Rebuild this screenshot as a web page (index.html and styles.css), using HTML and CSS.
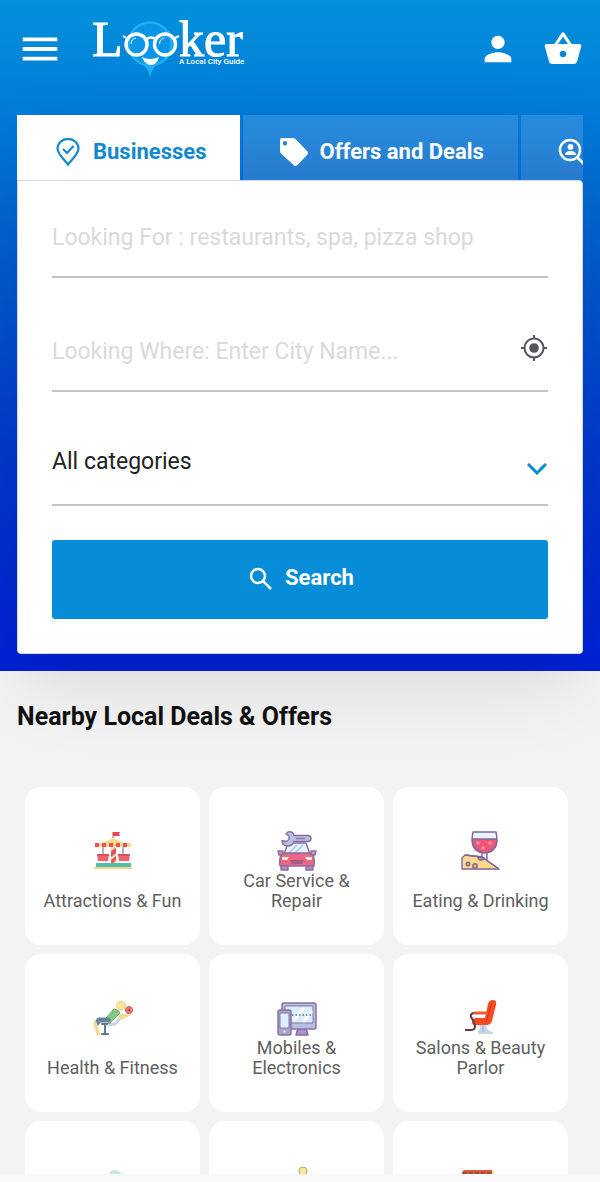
FILE: index.html
```html
<!DOCTYPE html>
<html lang="en">
<head>
<meta charset="utf-8">
<meta name="viewport" content="width=device-width, initial-scale=1">
<title>Looker - A Local City Guide</title>
<link rel="stylesheet" href="styles.css">
</head>
<body>
<div class="page">
  <div class="content">
    <div class="hero">
      <header class="header">
        <button class="icon-button" type="button" aria-label="Menu">
          <svg class="icon-menu" viewBox="0 0 24 24"><path d="M3 18h18v-2H3v2zm0-5h18v-2H3v2zm0-7v2h18V6H3z"/></svg>
        </button>
        <a class="logo" href="#" aria-label="Looker home">
          <svg class="logo-art" viewBox="0 0 156 60">
            <circle cx="58" cy="25" r="21.500" fill="#0a96e8" stroke="#1cb0f4" stroke-width="2.500"/>
            <path d="M52 46.500q4 3 6 12q2-9 6-12z" fill="#1cb0f4"/>
            <text class="logo-name" x="0" y="37">L</text>
            <text class="logo-name" x="87" y="37">ker</text>
            <g fill="none" stroke="#fff">
              <circle cx="44.500" cy="25.500" r="10.500" stroke-width="3.400"/>
              <circle cx="73" cy="25.500" r="10.500" stroke-width="3.400"/>
              <path d="M54 20.500q5-4 10 0" stroke-width="2.500"/>
              <path d="M36 20l-5-3M81 20l6-3" stroke-width="2"/>
              <path d="M39 25q0-5 5-6M67.500 25q0-5 5-6" stroke-width="1"/>
            </g>
            <path d="M50 38q8 4 17 0q-2 8-8 8t-9-8z" fill="#fff"/>
            <text class="logo-tagline" x="87" y="45">A Local City Guide</text>
          </svg>
        </a>
        <nav class="header-actions">
          <button class="icon-button" type="button" aria-label="Account">
            <svg class="icon-action" viewBox="0 0 24 24"><path d="M12 12c2.210 0 4-1.790 4-4s-1.790-4-4-4-4 1.790-4 4 1.790 4 4 4zm0 2c-2.670 0-8 1.340-8 4v2h16v-2c0-2.660-5.330-4-8-4z"/></svg>
          </button>
          <button class="icon-button" type="button" aria-label="Basket">
            <svg class="icon-action" viewBox="0 0 24 24"><path d="M17.210 9l-4.380-6.560c-.19-.28-.51-.42-.83-.42-.32 0-.64.14-.83.430L6.790 9H2c-.55 0-1 .45-1 1 0 .09.010.180.040.270l2.540 9.270c.230.840 1 1.460 1.920 1.460h13c.92 0 1.690-.62 1.930-1.460l2.540-9.270L23 10c0-.55-.45-1-1-1h-4.790zM9 9l3-4.400L15 9H9zm3 8c-1.100 0-2-.9-2-2s.9-2 2-2 2 .9 2 2-.9 2-2 2z"/></svg>
          </button>
        </nav>
      </header>

      <div class="finder">
        <div class="tabs">
          <button class="tab tab-active" type="button">
            <svg class="tab-icon" viewBox="0 0 28 28" fill="none" stroke="currentColor" stroke-width="2.200"><path d="M14 26.500C8 19 3.500 15.500 3.500 10.500a10.500 9.600 0 0 1 21 0c0 5-4.500 8.500-10.500 16z"/><path d="M9 11l4 4 6.500-7"/></svg>
            Businesses
          </button>
          <button class="tab" type="button">
            <svg class="tab-icon" viewBox="0 0 28 28" fill="currentColor"><path fill-rule="evenodd" d="M2 0h11q1.500 0 2.500 1L27 13q2 2 0 4l-9.500 10q-2 2-4 0L1 15.500Q0 14.500 0 13V2q0-2 2-2zm3 3a2.200 2.200 0 1 0 0 4.400A2.200 2.200 0 0 0 5 3z"/></svg>
            Offers and Deals
          </button>
          <button class="tab tab-people" type="button" aria-label="People">
            <svg class="tab-icon" viewBox="0 0 28 28" fill="none" stroke="currentColor"><circle cx="12" cy="12" r="10" stroke-width="2.500"/><path d="M19 19l8 8" stroke-width="3"/><circle cx="12.500" cy="9" r="2.900" fill="currentColor" stroke="none"/><path d="M7 17q0-4 5.500-4t5.500 4z" fill="currentColor" stroke="none"/></svg>
          </button>
        </div>

        <form class="search-card">
          <label class="field">
            <input class="field-control" type="text" aria-label="Looking For" placeholder="Looking For : restaurants, spa, pizza shop">
          </label>
          <label class="field">
            <input class="field-control" type="text" aria-label="Looking Where" placeholder="Looking Where: Enter City Name...">
            <svg class="field-locate" viewBox="0 0 26 26" fill="none" stroke="currentColor" stroke-width="2"><circle cx="13" cy="13" r="9.500"/><circle cx="13" cy="13" r="4.800" fill="currentColor" stroke="none"/><path d="M13 0v4M13 22v4M0 13h4M22 13h4"/></svg>
          </label>
          <label class="field">
            <select class="field-control field-select" aria-label="Category"><option>All categories</option></select>
            <svg class="field-chevron" viewBox="0 0 20 12" fill="none" stroke="currentColor" stroke-width="3"><path d="M1 1l9 9 9-9"/></svg>
          </label>
          <button class="search-button" type="submit">
            <svg class="search-icon" viewBox="0 0 24 24" fill="none" stroke="currentColor" stroke-width="2.500"><circle cx="9" cy="10" r="7"/><path d="M14 15l8 8"/></svg>
            Search
          </button>
        </form>
      </div>
    </div>

    <section class="deals">
      <h2 class="deals-title">Nearby Local Deals &amp; Offers</h2>
      <div class="category-grid">
        <a class="category" href="#">
          <svg class="category-icon" viewBox="0 0 40 40">
            <path d="M20 7V1" stroke="#b9545c" stroke-width="1"/><path d="M20 1h7l-1 2 1 2h-7z" fill="#e84652"/>
            <path d="M3 13q8-1 17-6 9 5 17 6z" fill="#f7db86"/>
            <path d="M2 12h36v4H2z" fill="#f7d88b"/><path d="M2 12h4v4H2zM9 12h4v4H9zM16 12h4v4h-4zM23 12h4v4h-4zM30 12h4v4h-4z" fill="#e6535c"/>
            <path d="M10 16v8M30 16v8" stroke="#75606b" stroke-width="1"/>
            <path d="M18 16h5v16h-5z" fill="#fbd9a0"/><path d="M18 20l5-3v5l-5 4zM18 29l5-4v4l-3 3h-2z" fill="#e6535c"/>
            <path d="M4 23h12l-1 7H5zM25 23h12l-1 7H26z" fill="#ee636c"/><path d="M4 24h12M25 24h12" stroke="#b9424c"/>
            <path d="M3 32h35v4H3z" fill="#58bea5"/><path d="M1 36h38v2H1z" fill="#f3d48c"/>
          </svg>
          <span class="category-name">Attractions &amp; Fun</span>
        </a>
        <a class="category" href="#">
          <svg class="category-icon" viewBox="0 0 40 40" stroke="#8a6ca4" stroke-width="1.400" stroke-linejoin="round">
            <path d="M4 33h7v6H4zM29 33h7v6h-7z" fill="#aa91bd"/>
            <path d="M7 23l4-11h18l4 11z" fill="#e9f3ff"/><path d="M12 22l8-8M18 22l8-8" stroke="#9bc9ee"/>
            <path d="M1 20h5v4H2zM34 20h5l-1 4h-4z" fill="#f08aa3"/>
            <path d="M4 24l4-2h24l4 2q2 4 1 11H3q-1-7 1-11z" fill="#ec6687"/>
            <path d="M5 26h7l-2 3H5zM28 26h7v3h-5z" fill="#fff3cf" stroke="none"/><path d="M13 29h14l-2 4H15z" fill="#a85b83" stroke="none"/>
            <path d="M11 1q5-1 6 3.500h14q3 0 3 3t-3 3H17q-2 5-7 4.500t-5-5.500l4 1 3-2V5L9 3z" fill="#b9bfe1"/><path d="M19 7.500h9" fill="none"/>
          </svg>
          <span class="category-name">Car Service &amp; Repair</span>
        </a>
        <a class="category" href="#">
          <svg class="category-icon" viewBox="0 0 40 40" stroke="#80659e" stroke-width="1.400" stroke-linejoin="round">
            <path d="M12 1h23q4 18-9 21v12h-5V22Q8 19 12 1z" fill="#e9f2ff"/><path d="M11.500 8h24q1 12-12 14Q11 20 11.500 8z" fill="#ee5778"/>
            <g fill="#ffaaa4" stroke="none"><circle cx="17" cy="12" r="1.500"/><circle cx="29" cy="12" r="1.500"/><circle cx="22" cy="17" r="1.500"/></g>
            <path d="M1 27l3-3 17 2 17 12H1z" fill="#ffd98d"/><path d="M4 24l17 2 17 12" fill="none"/><path d="M17 26a3 2.500 0 0 0 6 1z" fill="#bf9bb0"/>
            <circle cx="7" cy="33" r="1.800" fill="#edb567"/><circle cx="14" cy="35" r="2.200" fill="#edb567"/>
          </svg>
          <span class="category-name">Eating &amp; Drinking</span>
        </a>
        <a class="category" href="#">
          <svg class="category-icon" viewBox="0 -2 40 40" stroke-linecap="round" stroke-linejoin="round">
            <path d="M9 24h9M12 25v8M9 34h6" fill="none" stroke="#64788e" stroke-width="2"/><path d="M16 25l6-1 8-9" fill="none" stroke="#c5d8ef" stroke-width="3"/>
            <path d="M23 12l6 6 7-4" fill="none" stroke="#f3dd94" stroke-width="3.500"/>
            <path d="M12 19L21 9q4 0 6 4L17 23z" fill="#83c981" stroke="#6fae78" stroke-width="1"/>
            <path d="M15 20H6l-2 3" fill="none" stroke="#68829e" stroke-width="5"/>
            <path d="M2 23l3 11" stroke="#f4dc8a" stroke-width="3.500"/><circle cx="28" cy="5.500" r="4.300" fill="#ffe697" stroke="#e3cf80"/>
            <circle cx="36" cy="10" r="3.600" fill="#ed6f70" stroke="#d8686c"/><circle cx="36" cy="10" r="1" fill="#7d4c56"/>
          </svg>
          <span class="category-name">Health &amp; Fitness</span>
        </a>
        <a class="category" href="#">
          <svg class="category-icon" viewBox="0 -2 40 40" stroke="#84749f" stroke-width="1.500" stroke-linejoin="round">
            <path d="M21 28h8l2 7H19z" fill="#a991c6"/><rect x="5" y="3" width="34" height="26" rx="2" fill="#b9bfe4"/><path d="M8 6h28v17H8z" fill="#d8eeff" stroke-width="1"/>
            <path d="M17 20L27 8M26 22l9-11" stroke="#fff" stroke-width="3"/><path d="M15 15h21" stroke="#6b6587" stroke-dasharray="1.500 2"/>
            <rect x="1" y="10" width="13" height="25" rx="2" fill="#aaa6cb"/><path d="M3 13h9v15H3z" fill="#dceeff" stroke-width="1"/><circle cx="7.500" cy="31.500" r="1" fill="#fff" stroke="none"/>
          </svg>
          <span class="category-name">Mobiles &amp; Electronics</span>
        </a>
        <a class="category" href="#">
          <svg class="category-icon" viewBox="0 -1 40 40">
            <path d="M19 25h6l1 5 5 3H16l3-3z" fill="#c6d6eb"/><path d="M17 34h15M22 27v6" stroke="#9babc4"/>
            <path d="M27 5q1-4 5-4t3 5l-4 16q-1 4-6 4H13q-2 0-2-3t3-4h10z" fill="#f74b24"/><path d="M30 6l-5 17" stroke="#c3361d"/>
            <path d="M26 14H14q-5 0-4 4l3 5q3 8-3 8H4" fill="none" stroke="#68383c" stroke-width="2"/><path d="M14 14h11" stroke="#ed5b34" stroke-width="3" stroke-linecap="round"/>
          </svg>
          <span class="category-name">Salons &amp; Beauty Parlor</span>
        </a>
        <a class="category" href="#" aria-label="More services">
          <svg class="category-icon" viewBox="0 0 40 40"><circle cx="22" cy="12" r="7" fill="#c5e8dc"/></svg>
        </a>
        <a class="category" href="#" aria-label="More activities">
          <svg class="category-icon" viewBox="0 0 40 40"><circle cx="26" cy="6" r="4" fill="#ffe99a" stroke="#b6a56c"/><path d="M24 8h4v10h-4z" fill="#ffe99a"/></svg>
        </a>
        <a class="category" href="#" aria-label="More stores">
          <svg class="category-icon" viewBox="0 0 40 40"><path d="M3 5h28v18H1V7z" fill="#dc573c"/><path d="M31 5l2 2v16h-2z" fill="#f5d788"/><path d="M2 8h30" stroke="#8f5145" stroke-width="2" stroke-dasharray="4 2"/></svg>
        </a>
      </div>
    </section>
  </div>
  <footer class="bottom-strip"></footer>
</div>
</body>
</html>
```

FILE: styles.css
```css
* {
  box-sizing: border-box;
}

body {
  margin: 0;
  font-family: Roboto, "Liberation Sans", sans-serif;
  color: #111;
  background: #f3f3f3;
}

button,
input,
select {
  margin: 0;
  padding: 0;
  border: 0;
  border-radius: 0;
  background: none;
  color: inherit;
  font: inherit;
}

svg {
  display: block;
  flex: none;
}

.page {
  display: flex;
  flex-direction: column;
  height: 100vh;
}

.content {
  flex: 1;
  min-height: 0;
  overflow: hidden;
}

.bottom-strip {
  height: 8px;
  background: #f9f9f9;
}

.hero {
  padding: 0 17px 17px;
  background: linear-gradient(#0391da 0%, #007bd8 17%, #0054ce 45%, #0036cd 70%, #0020d6 100%);
}

.header {
  display: flex;
  align-items: center;
  height: 115px;
  padding-bottom: 18px;
  color: #fff;
}

.icon-button {
  fill: currentColor;
}

.icon-menu {
  width: 46px;
  height: 46px;
}

.logo {
  margin-left: 29px;
}

.logo-art {
  width: 156px;
  height: 60px;
  overflow: visible;
}

.logo-name {
  fill: #fff;
  stroke: #fff;
  stroke-width: 1px;
  font: 50px "Liberation Serif", serif;
}

.logo-tagline {
  fill: #fff;
  font: 500 8px Roboto, sans-serif;
}

.header-actions {
  display: flex;
  gap: 25px;
  margin-left: auto;
}

.icon-action {
  width: 40px;
  height: 40px;
}

.finder {
  position: relative;
  box-shadow: 0 32px 80px -8px rgba(0, 0, 0, 0.12);
}

.tabs {
  display: flex;
  gap: 3px;
  overflow: hidden;
}

.tab {
  display: flex;
  flex: none;
  align-items: center;
  gap: 11px;
  height: 65px;
  padding: 8px 34px 0 37px;
  background: linear-gradient(#268cdc, #287bcf);
  color: #fff;
  font-size: 22px;
  font-weight: 700;
  line-height: 28px;
  white-space: nowrap;
}

.tab-active {
  background: #fff;
  color: #1189ce;
}

.tab-people {
  padding-right: 160px;
}

.tab-icon {
  width: 28px;
  height: 28px;
}

.search-card {
  display: flex;
  flex-direction: column;
  gap: 34px;
  padding: 17px 34px 34px;
  border: 1px solid #d2d7e2;
  border-radius: 0 4px 4px 4px;
  background: #fff;
}

.field {
  display: flex;
  align-items: center;
  height: 80px;
  border-bottom: 2px solid #c4c4c4;
}

.field-control {
  flex: 1;
  min-width: 0;
  height: 100%;
  outline: 0;
  font-size: 23px;
}

.field-control::placeholder {
  color: #dadada;
  opacity: 1;
}

.field-locate {
  width: 26px;
  height: 26px;
  margin: 0 1px 6px 8px;
  color: #55565f;
}

.field-select {
  padding-bottom: 8px;
  appearance: none;
  color: #222;
}

.field-chevron {
  width: 20px;
  height: 12px;
  margin: 8px 1px 0 8px;
  color: #078bd3;
}

.search-button {
  display: flex;
  align-items: center;
  justify-content: center;
  gap: 12px;
  height: 79px;
  padding: 0 0 4px 3px;
  border-radius: 3px;
  background: #078dd8;
  color: #fff;
  font-size: 22px;
  font-weight: 700;
}

.search-icon {
  width: 24px;
  height: 24px;
}

.deals-title {
  margin: 0;
  padding: 29px 17px 54px;
  color: #111;
  font-size: 25px;
  font-weight: 700;
  line-height: 33px;
}

.category-grid {
  display: grid;
  grid-template-columns: repeat(3, 1fr);
  gap: 9px;
  padding: 0 32px 0 25px;
}

.category {
  display: flex;
  flex-direction: column;
  align-items: center;
  padding: 44px 20px 34px;
  border-radius: 16px;
  background: #fff;
  color: #606060;
  text-decoration: none;
}

.category-icon {
  width: 40px;
  height: 40px;
}

.category-name {
  display: flex;
  align-items: flex-end;
  min-height: 40px;
  margin: 0 -8px;
  font-size: 18px;
  line-height: 20px;
  text-align: center;
}
```
